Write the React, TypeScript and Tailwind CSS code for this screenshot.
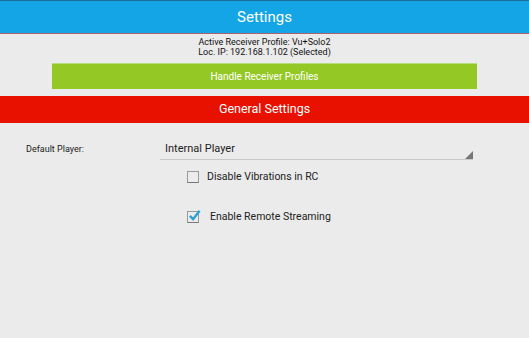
import React, { useState } from 'react'

const Checkbox: React.FC<{ checked: boolean; onChange: () => void }> = ({ checked, onChange }) => (
  <button onClick={onChange} className="relative h-[12px] w-[12px] shrink-0">
    <span className="absolute left-0 top-0 h-[12px] w-[12px] border border-[#9a9a9a] border-b-[#777] bg-[#ececec]" />
    {checked && (
      <svg viewBox="0 0 14 14" className="absolute left-[1px] top-[-2px] h-[13px] w-[13px]">
        <path d="M2 7.5 L5.5 11 L12.5 2" fill="none" stroke="#2aa3d9" strokeWidth="2.6" />
      </svg>
    )}
  </button>
)

const App: React.FC = () => {
  const [vibrations, setVibrations] = useState(false)
  const [streaming, setStreaming] = useState(true)

  return (
    <div className="h-[338px] w-[529px] overflow-hidden bg-[#ebebeb] font-['Roboto',sans-serif]">
      {/* header */}
      <div className="flex h-[34px] items-center justify-center border-t border-b border-t-[#1c6d97] border-b-[#b0606a] bg-[#13a5e6]">
        <h1 className="text-[15px] text-white">Settings</h1>
      </div>

      <div className="mt-[3px] flex flex-col items-center text-[9px] leading-[10px] text-[#111]">
        <span>Active Receiver Profile: Vu+Solo2</span>
        <span>Loc. IP: 192.168.1.102 (Selected)</span>
      </div>

      <div className="mx-[52px] mt-[6px] flex h-[26px] items-center justify-center border-t border-[#b5dd7c] bg-[#94c925] text-[10px] text-white">
        Handle Receiver Profiles
      </div>

      <div className="mt-[7px] flex h-[27px] items-center justify-center bg-[#e81100] text-[12.5px] text-white">
        General Settings
      </div>

      {/* settings list */}
      <div className="mt-[16px] flex items-center">
        <span className="w-[160px] pl-[26px] text-[9px] text-[#222]">Default Player:</span>
        <div className="relative flex h-[21px] w-[313px] items-center border-b border-[#c8c8c8] pl-[5px] text-[11px] text-[#222]">
          Internal Player
          <svg viewBox="0 0 8 8" className="absolute bottom-0 right-0 h-[8px] w-[8px]">
            <polygon points="8,0 8,8 0,8" fill="#777" />
          </svg>
        </div>
      </div>

      <div className="ml-[187px] mt-[9px] flex items-center gap-[8px] text-[10.5px] text-[#222]">
        <Checkbox checked={vibrations} onChange={() => setVibrations(!vibrations)} />
        <span>Disable Vibrations in RC</span>
      </div>

      <div className="ml-[187px] mt-[24px] flex items-center gap-[11px] text-[10.5px] text-[#222]">
        <Checkbox checked={streaming} onChange={() => setStreaming(!streaming)} />
        <span>Enable Remote Streaming</span>
      </div>
    </div>
  )
}

export default App
